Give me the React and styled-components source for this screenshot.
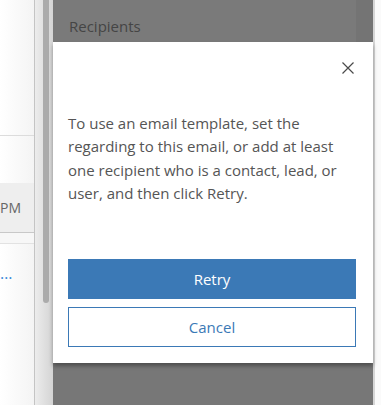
import styled, { createGlobalStyle } from "styled-components";

const GlobalStyle = createGlobalStyle`
  html, body {
    margin: 0;
    padding: 0;
    background: #fafafa;
    font-family: "Open Sans", "Noto Sans", "Liberation Sans", sans-serif;
  }
`;

const Page = styled.div`
  display: flex;
  width: 381px;
  height: 405px;
  overflow: hidden;
`;

const LeftPane = styled.div`
  width: 34px;
  display: flex;
  flex-direction: column;
  border-right: 1px solid #c4c4c4;
  background: linear-gradient(90deg, #ffffff, #f4f4f4);
`;

const TopCard = styled.div`
  height: 135px;
  border-bottom: 1px solid #dcdcdc;
`;

const CardGap = styled.div`
  height: 47px;
`;

const TimeBox = styled.div`
  height: 49px;
  background: #eeeeee;
  border-bottom: 1px solid #c8c8c8;
  display: flex;
  align-items: center;
  justify-content: flex-end;
  padding-right: 13px;
  font-size: 14px;
  color: #666;
`;

const Spacer = styled.div`
  height: 10px;
  background: #f7f7f7;
`;

const LowerCard = styled.div`
  flex: 1;
  border-top: 1px solid #e2e2e2;
  padding-top: 19px;
  color: #3b8ad9;
  font-size: 16px;
  letter-spacing: 1px;
  line-height: 20px;
`;

const Gutter = styled.div`
  width: 18px;
  box-sizing: border-box;
  padding-left: 8px;
  background: linear-gradient(90deg, #ececec, #d4d4d4);
  display: flex;
`;

const Thumb = styled.div`
  width: 6px;
  height: 303px;
  background: #ababab;
  border-radius: 0 0 3px 3px;
`;

const Backdrop = styled.div`
  width: 320px;
  display: flex;
  flex-direction: column;
  background: #777777;
`;

const BackdropHeader = styled.div`
  height: 42px;
  display: flex;
  background: #7a7a7a;
`;

const HeaderTitle = styled.div`
  flex: 1;
  padding: 16px 0 0 16px;
  font-size: 15px;
  color: #454545;
`;

const HeaderScroll = styled.div`
  width: 17px;
  background: #747474;
`;

const Dialog = styled.div`
  height: 321px;
  background: #ffffff;
  box-sizing: border-box;
  padding: 0 17px 16px 15px;
  display: flex;
  flex-direction: column;
  box-shadow: 0 3px 4px rgba(0, 0, 0, 0.35);
  position: relative;
  z-index: 1;
`;

const CloseRow = styled.div`
  display: flex;
  justify-content: flex-end;
  padding: 19px 1px 0 0;
`;

const CloseButton = styled.button`
  border: none;
  background: none;
  padding: 0;
  width: 14px;
  height: 14px;
  display: flex;
  align-items: center;
  justify-content: center;
  cursor: pointer;
`;

const Message = styled.p`
  margin: 37px 0 0 0;
  font-size: 15px;
  line-height: 23.3px;
  color: #555555;
  flex: 1;
`;

const Button = styled.button`
  height: 40px;
  width: 100%;
  box-sizing: border-box;
  font-family: inherit;
  font-size: 15px;
  border: 1px solid #3b79b6;
  background: ${(p) => (p.$primary ? "#3b79b6" : "#ffffff")};
  color: ${(p) => (p.$primary ? "#ffffff" : "#3b79b6")};
  cursor: pointer;
  & + & {
    margin-top: 8px;
  }
`;

const RightEdge = styled.div`
  width: 2px;
  background: #d6d6d6;
`;

export default function App() {
  return (
    <>
      <GlobalStyle />
      <Page>
        <LeftPane>
          <TopCard />
          <CardGap />
          <TimeBox>PM</TimeBox>
          <Spacer />
          <LowerCard>…</LowerCard>
        </LeftPane>
        <Gutter>
          <Thumb />
        </Gutter>
        <Backdrop>
          <BackdropHeader>
            <HeaderTitle>Recipients</HeaderTitle>
            <HeaderScroll />
          </BackdropHeader>
          <Dialog>
            <CloseRow>
              <CloseButton aria-label="Close">
                <svg width="12" height="12" viewBox="0 0 12 12">
                  <path d="M0.5 0.5 L11.5 11.5 M11.5 0.5 L0.5 11.5" stroke="#4a4a4a" strokeWidth="1.2" fill="none" />
                </svg>
              </CloseButton>
            </CloseRow>
            <Message>
              To use an email template, set the regarding to this email, or add at least one recipient who is a contact, lead, or user, and then click Retry.
            </Message>
            <Button $primary>Retry</Button>
            <Button>Cancel</Button>
          </Dialog>
        </Backdrop>
        <RightEdge />
      </Page>
    </>
  );
}
